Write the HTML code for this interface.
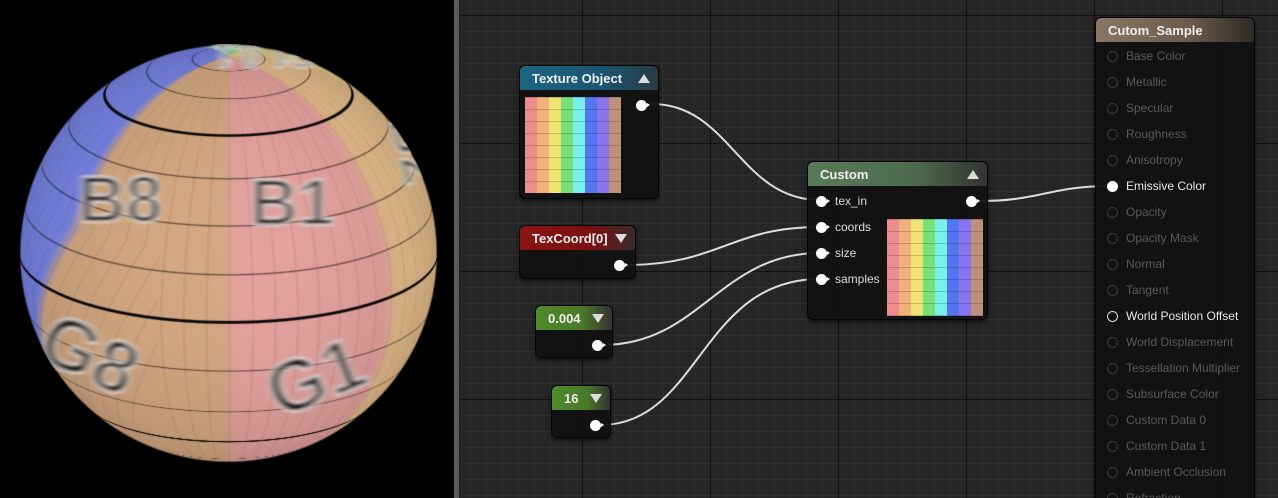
<!DOCTYPE html>
<html><head><style>
*{margin:0;padding:0;box-sizing:border-box}
html,body{width:1278px;height:498px;overflow:hidden}
body{background:#000;font-family:"Liberation Sans",sans-serif;position:relative}
#graph{position:absolute;left:461px;top:0;width:817px;height:498px;background-color:#262626;
background-image:linear-gradient(90deg,#121212 1px,transparent 1px),linear-gradient(#121212 1px,transparent 1px),linear-gradient(90deg,#303030 1px,transparent 1px),linear-gradient(#303030 1px,transparent 1px);
background-size:128px 128px,128px 128px,16px 16px,16px 16px;background-position:121px 15px,121px 15px,9px 15px,9px 15px}
.sep{position:absolute;left:454px;top:0;width:7px;height:498px;background:#5a5a5a;border-right:2px solid #222}
.node{position:absolute;background:rgba(16,17,16,.95);border:1px solid #050505;border-radius:6px;box-shadow:0 2px 4px rgba(0,0,0,.6)}
.hdr{height:24px;border-radius:5px 5px 0 0;color:#eee;font-size:13px;font-weight:bold;padding:5px 0 0 12px;position:relative}
.tri{position:absolute;right:8px;top:8px;width:0;height:0;border-left:6px solid transparent;border-right:6px solid transparent}
.up{border-bottom:9px solid #ddd}.dn{border-top:9px solid #ddd;top:8px}
.pin{position:absolute;width:11px;height:11px;border-radius:50%;background:#fff}
.pin::after{content:"";position:absolute;left:11px;top:3px;border-top:2.5px solid transparent;border-bottom:2.5px solid transparent;border-left:3px solid #fff}
.lbl{position:absolute;color:#ddd;font-size:12px}
.tex{position:absolute;width:96px;height:96px;background:linear-gradient(90deg,#ef8d8d 0 12.5%,#f0b27a 12.5% 25%,#eee472 25% 37.5%,#78e074 37.5% 50%,#7af0ee 50% 62.5%,#5476f0 62.5% 75%,#8a74ee 75% 87.5%,#c0907a 87.5%);}
.tex::after{content:"";position:absolute;inset:0;background-image:linear-gradient(rgba(0,0,0,.18) 1px,transparent 1px);background-size:100% 12px}
.out{position:absolute;left:1103px;width:160px;color:#5a5a5a;font-size:12px}
.out .p{position:absolute;left:4px;top:2px;width:11px;height:11px;border-radius:50%;border:1.5px solid #3c3c3c}
.out span{position:absolute;left:23px;top:0}
</style></head><body>
<div style="position:absolute;left:0;top:0;width:454px;height:498px;background:#000;overflow:hidden">
<canvas id="sp" width="454" height="498" style="position:absolute;left:0;top:0"></canvas>
<svg width="454" height="498" style="position:absolute;left:0;top:0">
<defs><clipPath id="c"><circle cx="228" cy="253" r="209"/></clipPath>
<filter id="bl"><feGaussianBlur stdDeviation="3.5 1"/></filter></defs>
<g clip-path="url(#c)" font-family="Liberation Sans" font-weight="bold" filter="url(#bl)" opacity="0.85">
<g fill="#0a0a0a" stroke="#ddd" stroke-width="2.5">
<text x="78" y="222" font-size="66">B8</text>
<text x="250" y="225" font-size="66">B1</text>
<text x="40" y="380" font-size="74" transform="rotate(25 90 355)">G8</text>
<text x="262" y="400" font-size="74" transform="rotate(-22 320 365)">G1</text>
<text x="382" y="150" font-size="54" transform="rotate(75 405 140)">B2</text>
<text x="140" y="68" font-size="34" transform="rotate(180 228 56)">G1 0,1</text>
</g></g>
</svg>
</div>
<script>
(function(){var c=document.getElementById('sp'),g=c.getContext('2d'),W=454,H=498,im=g.createImageData(W,H),d=im.data;
var cx=228,cy=253,R=209,t=0.336,ct=Math.cos(t),st=Math.sin(t);
var cols=[[228,162,158],[230,190,140],[228,208,140],[150,210,140],[140,210,210],[120,130,230],[122,134,232],[212,168,130]];
var thick=[53.6,0,-45],thin=[13.4,26.8,40.2,67,80,-15,-30,-60,-75];
for(var y=0;y<H;y++)for(var x=0;x<W;x++){var nx=(x-cx)/R,ny=(y-cy)/R,q=nx*nx+ny*ny;var i=(y*W+x)*4;
if(q>1){d[i+3]=255;continue}
var nz=Math.sqrt(1-q);var X=nx,Y=-ny*ct+nz*st,Z=ny*st+nz*ct;
var lat=Math.asin(Math.max(-1,Math.min(1,Y)))*180/Math.PI,lon=Math.atan2(X,Z)*180/Math.PI;
var u=lon*0.88;if(lon<-20&&lat<20){u-=0.45*(lat-20);if(u>-3)u=-3;}
var ci=Math.floor(u/45);ci=((ci%8)+8)%8;var col=cols[ci];
var f=u/45-Math.floor(u/45);var bl=0;
var nb=f>0.5?cols[(ci+1)%8]:cols[(ci+7)%8];var e=Math.min(f,1-f);if(e<0.06)bl=0.5*(1-e/0.06);
var r=col[0]*(1-bl)+nb[0]*bl,gg=col[1]*(1-bl)+nb[1]*bl,b=col[2]*(1-bl)+nb[2]*bl;
var sub=(u/5.6)-Math.floor(u/5.6);if(sub<0.12){r*=0.95;gg*=0.95;b*=0.95}
var dk=0;
for(var j=0;j<thin.length;j++){var dd=Math.abs(lat-thin[j]);if(dd<0.35)dk=Math.max(dk,0.55*(1-dd/0.35))}
for(var j=0;j<thick.length;j++){var dd=Math.abs(lat-thick[j]);if(dd<0.6)dk=Math.max(dk,0.95*(1-Math.max(0,dd-0.25)/0.35))}
var L=0.82+0.18*nz;var edge=q>0.985?(1-q)/0.015:1;
r=r*L*(1-dk);gg=gg*L*(1-dk);b=b*L*(1-dk);
d[i]=r*edge;d[i+1]=gg*edge;d[i+2]=b*edge;d[i+3]=255}
g.putImageData(im,0,0)})();
</script>
<div class="sep"></div>
<div id="graph"></div>
<svg style="position:absolute;left:0;top:0" width="1278" height="498" fill="none" stroke="#ddd" stroke-width="2">
<path d="M652 104 C730 104 740 200 820 200"/>
<path d="M980 201 C1040 201 1050 186 1110 186"/>
<path d="M626 265 C720 265 730 227 820 227"/>
<path d="M602 345 C700 345 720 253 820 253"/>
<path d="M600 425 C700 425 700 279 820 279"/>
</svg>
<div class="node" style="left:519px;top:65px;width:140px;height:134px">
<div class="hdr" style="background:linear-gradient(90deg,#1d6584,#1a5570 60%,#2a3a44)">Texture Object<div class="tri up"></div></div>
<div class="tex" style="left:5px;top:31px"></div>
<div class="pin" style="left:116px;top:34px"></div>
</div>
<div class="node" style="left:519px;top:225px;width:117px;height:54px">
<div class="hdr" style="background:linear-gradient(90deg,#8a1414,#7a1010 60%,#3a2a2a)">TexCoord[0]<div class="tri dn"></div></div>
<div class="pin" style="left:94px;top:34px"></div>
</div>
<div class="node" style="left:535px;top:305px;width:78px;height:53px">
<div class="hdr" style="background:linear-gradient(90deg,#4f8a2c,#4a7a28 60%,#333)">0.004<div class="tri dn"></div></div>
<div class="pin" style="left:56px;top:34px"></div>
</div>
<div class="node" style="left:551px;top:385px;width:60px;height:53px">
<div class="hdr" style="background:linear-gradient(90deg,#4f8a2c,#4a7a28 60%,#333)">16<div class="tri dn"></div></div>
<div class="pin" style="left:38px;top:34px"></div>
</div>
<div class="node" style="left:807px;top:161px;width:181px;height:159px">
<div class="hdr" style="background:linear-gradient(90deg,#587a58,#4e6a4e 60%,#333)">Custom<div class="tri up"></div></div>
<div class="pin" style="left:8px;top:34px"></div><div class="lbl" style="left:27px;top:32px">tex_in</div>
<div class="pin" style="left:158px;top:34px"></div>
<div class="pin" style="left:8px;top:60px"></div><div class="lbl" style="left:27px;top:58px">coords</div>
<div class="pin" style="left:8px;top:86px"></div><div class="lbl" style="left:27px;top:84px">size</div>
<div class="pin" style="left:8px;top:112px"></div><div class="lbl" style="left:27px;top:110px">samples</div>
<div class="tex" style="left:79px;top:57px;height:97px"></div>
</div>
<div class="node" style="left:1095px;top:17px;width:160px;height:481px;border-bottom:none;border-radius:6px 6px 0 0">
<div class="hdr" style="background:linear-gradient(90deg,#8a7664,#6a5a4c 60%,#2e2a26)">Cutom_Sample</div>
</div>
<div class="out" style="top:49px"><div class="p"></div><span>Base Color</span></div>
<div class="out" style="top:75px"><div class="p"></div><span>Metallic</span></div>
<div class="out" style="top:101px"><div class="p"></div><span>Specular</span></div>
<div class="out" style="top:127px"><div class="p"></div><span>Roughness</span></div>
<div class="out" style="top:153px"><div class="p"></div><span>Anisotropy</span></div>
<div class="out" style="top:179px;color:#e8e8e8"><div class="p" style="background:#fff;border-color:#fff"></div><span>Emissive Color</span></div>
<div class="out" style="top:205px"><div class="p"></div><span>Opacity</span></div>
<div class="out" style="top:231px"><div class="p"></div><span>Opacity Mask</span></div>
<div class="out" style="top:257px"><div class="p"></div><span>Normal</span></div>
<div class="out" style="top:283px"><div class="p"></div><span>Tangent</span></div>
<div class="out" style="top:309px;color:#e8e8e8"><div class="p" style="border-color:#ddd"></div><span>World Position Offset</span></div>
<div class="out" style="top:335px"><div class="p"></div><span>World Displacement</span></div>
<div class="out" style="top:361px"><div class="p"></div><span>Tessellation Multiplier</span></div>
<div class="out" style="top:387px"><div class="p"></div><span>Subsurface Color</span></div>
<div class="out" style="top:413px"><div class="p"></div><span>Custom Data 0</span></div>
<div class="out" style="top:439px"><div class="p"></div><span>Custom Data 1</span></div>
<div class="out" style="top:465px"><div class="p"></div><span>Ambient Occlusion</span></div>
<div class="out" style="top:491px"><div class="p"></div><span>Refraction</span></div>
</body></html>
